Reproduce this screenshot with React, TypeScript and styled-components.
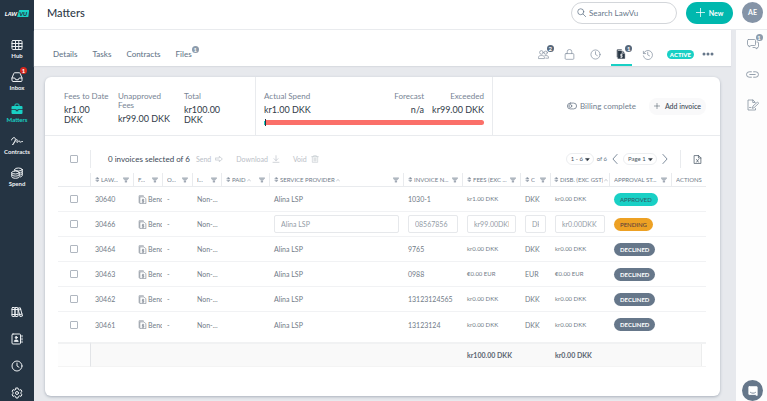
import React from 'react';
import styled, { createGlobalStyle, css } from 'styled-components';

const c = {
  navy: '#253443',
  teal: '#19d0c5',
  tealDark: '#00b8ae',
  slate: '#66778a',
  muted: '#8592a0',
  text: '#3b4856',
  line: '#e9ebee',
  canvas: '#e7e9ed',
};

const GlobalStyle = createGlobalStyle`
  *, *::before, *::after { box-sizing: border-box; }
  body { margin: 0; background: ${c.canvas}; font-family: Lato, "Liberation Sans", sans-serif; color: ${c.text}; }
  button, input, select { font: inherit; color: inherit; margin: 0; }
  a { color: inherit; text-decoration: none; }
`;

/* ---------- icons ---------- */

const Svg = styled.svg<{ $size?: number }>`
  display: block;
  flex: none;
  width: ${(p) => p.$size ?? 12}px;
  height: ${(p) => p.$size ?? 12}px;
  fill: none;
  stroke: currentColor;
  stroke-linecap: round;
  stroke-linejoin: round;
`;

type IconProps = { size?: number; weight?: number };
const makeIcon =
  (body: React.ReactNode, baseWeight = 2) =>
  ({ size = 12, weight = baseWeight }: IconProps) => (
    <Svg viewBox="0 0 24 24" $size={size} strokeWidth={weight} aria-hidden="true">
      {body}
    </Svg>
  );

const GridIcon = makeIcon(<><rect x="2" y="3" width="20" height="18" rx="2" /><path d="M2 9h20M2 15h20M9 3v18M15.500 3v18" /></>);
const InboxIcon = makeIcon(<><path d="M2 14l3.500-9a2 2 0 0 1 2-1.500h9a2 2 0 0 1 2 1.500L22 14v5a2 2 0 0 1-2 2H4a2 2 0 0 1-2-2z" /><path d="M2 14h5.500l2 3.500h5l2-3.500H22" /></>);
const BriefcaseIcon = makeIcon(
  <>
    <path d="M8 6V4a2 2 0 0 1 2-2h4a2 2 0 0 1 2 2v2" />
    <path d="M1 8a2 2 0 0 1 2-2h18a2 2 0 0 1 2 2v4.500H1z" fill="currentColor" stroke="none" />
    <path d="M1 14h8.500v2.500h5V14H23v6a2 2 0 0 1-2 2H3a2 2 0 0 1-2-2z" fill="currentColor" stroke="none" />
    <path d="M11 11.500h2v3h-2z" fill="currentColor" stroke="none" />
  </>,
);
const SignatureIcon = makeIcon(<path d="M1 10c1-4 5-6 7-4 3 3-3 10-5 14 4-4 7-12 9-11 2 .8-2 6 0 6s3-4 4.500-3.500 0 3 1.500 3 2-1.500 5-1.500" />);
const CoinsIcon = makeIcon(
  <>
    <ellipse cx="15" cy="5" rx="7.500" ry="3" />
    <path d="M7.500 5v3M22.500 5v12c0 1.500-2 2.500-4 3M22.500 9c0 1.500-2 2.500-4 3M22.500 13c0 1.500-2 2.500-4 3" />
    <ellipse cx="9" cy="11" rx="7.500" ry="3" />
    <path d="M1.500 11v8.500c0 1.700 3.400 3 7.500 3s7.500-1.300 7.500-3V11M1.500 15.200c0 1.700 3.400 3 7.500 3s7.500-1.300 7.500-3" />
  </>,
);
const BooksIcon = makeIcon(<><rect x="2" y="3" width="6" height="18" rx="1" /><rect x="8" y="3" width="6" height="18" rx="1" /><path d="M14.500 4.500l4-1 4.500 16.500-4 1zM2 7h12M2 17h12M15.500 8l4-1M18 17l4-1" /></>);
const ContactIcon = makeIcon(<><rect x="2" y="2" width="17" height="20" rx="2" /><circle cx="10.500" cy="9" r="2" fill="currentColor" /><path d="M6.500 16c0-3 8-3 8 0z" fill="currentColor" /><path d="M22 5v3M22 11v3M22 17v2" /></>);
const ClockIcon = makeIcon(<><circle cx="12" cy="12" r="10" /><path d="M12 6v6l4 2.500" /></>);
const GearIcon = makeIcon(
  <>
    <path d="M10 2h4l.7 3 2.300 1.300 3-1 2 3.500-2.300 2v2.400l2.300 2-2 3.500-3-1-2.300 1.300L14 22h-4l-.7-3L7 17.700l-3 1-2-3.500 2.300-2v-2.400L2 8.800l2-3.500 3 1L9.300 5z" />
    <circle cx="12" cy="12" r="3" />
  </>,
);
const SearchIcon = makeIcon(<><circle cx="10" cy="10" r="8" /><path d="M16 16l7 7" /></>, 2);
const PlusIcon = makeIcon(<path d="M12 1v22M1 12h22" />);
const PeopleIcon = makeIcon(
  <>
    <circle cx="7.500" cy="7.500" r="4" /><circle cx="17" cy="8" r="3.500" />
    <path d="M1 20v-2c0-5 13-5 13 0v2zM15 14.500c4-1 8 .5 8 3.500v2h-6" />
  </>,
);
const LockIcon = makeIcon(<><rect x="2.500" y="10" width="19" height="12.500" rx="2" /><path d="M7 10V6a5 5 0 0 1 10 0v4" /></>);
const HistoryIcon = makeIcon(<><path d="M3 5v5h5M3.500 9.500A10 10 0 1 1 3 15" /><path d="M12.500 7v6l4 2" /></>);
const InvoiceSolidIcon = makeIcon(
  <>
    <path d="M5 5h11l5 5v13H5z" fill="currentColor" />
    <path d="M3 19V2h10" strokeWidth="2" />
    <path d="M15 4v6h7" stroke="#fff" strokeWidth="1.500" />
    <path d="M15 13h-4v3h4v3.500h-4.500M13 11.500v9.500" stroke="#fff" strokeWidth="1.500" />
  </>,
);
const InvoiceIcon = makeIcon(
  <>
    <path d="M3 20V2h11" />
    <path d="M6 5h10l5 5v13H6z" />
    <path d="M15.500 12.500h-4v3h4v3.500h-4.500M13.300 11v10" />
  </>,
  1.6,
);
const ChatsIcon = makeIcon(<><path d="M3 3h12a2 2 0 0 1 2 2v8a2 2 0 0 1-2 2H8l-4 3v-3H3a2 2 0 0 1-2-2V5a2 2 0 0 1 2-2z" /><path d="M20 8h1a2 2 0 0 1 2 2v7a2 2 0 0 1-2 2h-1v3l-4-3h-4" /></>, 1.6);
const LinkIcon = makeIcon(<path d="M10 7H6a5 5 0 0 0 0 10h4M14 7h4a5 5 0 0 1 0 10h-4M7 12h10" />, 1.6);
const NoteIcon = makeIcon(<><path d="M17 19v3H2V2h10l4 4M11.500 2v5H16" /><path d="M11 18l1-4 9-8 2.500 2.500-9 8.500zM5 17h3" /></>, 1.6);
const ArrowIcon = makeIcon(<path d="M2 9h11V4l9 8-9 8v-5H2z" />);
const DownloadIcon = makeIcon(<path d="M12 2v15M6 11l6 6 6-6M3 22h18" />);
const TrashIcon = makeIcon(<path d="M2 5h20M8 5V2h8v3M4 5v17h16V5M9 9v9M12 9v9M15 9v9" />, 1.6);
const ToggleIcon = makeIcon(<><rect x="1" y="5" width="22" height="14" rx="7" /><circle cx="8" cy="12" r="3.500" /></>);
const LeftIcon = makeIcon(<path d="M17 1L7 12l10 11" />);
const RightIcon = makeIcon(<path d="M7 1l10 11L7 23" />);
const ExcelIcon = makeIcon(<><path d="M4 1.500h11l6 6v15H4zM14.500 1.500V8H21" /><path d="M9.500 12l5 7M14.500 12l-5 7" /></>);
const CaretIcon = makeIcon(<path d="M3 7h18l-9 11z" fill="currentColor" />);
const UpIcon = makeIcon(<path d="M4 16l8-7 8 7" />);
const SortIcon = makeIcon(<path d="M12 1l7 8H5zM12 23l7-8H5z" fill="currentColor" />);
const FilterIcon = makeIcon(<path d="M1 3h22v3H1zM5 9h14v2H5zM9 14h6v7H9z" fill="currentColor" strokeWidth="1" />);
const IntercomIcon = makeIcon(<><path d="M3 1.500h18a1 1 0 0 1 1 1V23l-5-2.500H3a1 1 0 0 1-1-1v-17a1 1 0 0 1 1-1z" fill="currentColor" /><path d="M6 15.500c3 2.500 9 2.500 12 0" stroke={c.slate} /></>);

/* ---------- page frame ---------- */

const Page = styled.div`
  display: flex;
  min-height: 100vh;
`;
const Sidebar = styled.nav`
  display: flex;
  flex-direction: column;
  flex: none;
  width: 34px;
  padding: 10px 0 2px;
  background: ${c.navy};
  color: #eceff2;
`;
const Logo = styled.a`
  display: flex;
  align-items: center;
  justify-content: center;
  height: 7px;
  margin: 0 0 22px 0;
  font: italic 900 6px/7px Lato, sans-serif;
  color: #fff;
`;
const LogoMark = styled.span`
  padding: 0 2px;
  background: ${c.teal};
  color: ${c.navy};
  clip-path: polygon(2px 0, 100% 0, calc(100% - 1px) 100%, 0 100%);
`;
const SideLink = styled.a<{ $active?: boolean }>`
  display: flex;
  flex-direction: column;
  align-items: center;
  gap: 1px;
  height: 32px;
  font: 700 6px/8px Lato, sans-serif;
  color: ${(p) => (p.$active ? c.teal : '#eceff2')};
`;
const SideTools = styled.div`
  display: flex;
  flex-direction: column;
  align-items: center;
  gap: 15px;
  margin-top: auto;
`;
const Badged = styled.span`
  position: relative;
  display: flex;
`;
const Badge = styled.span<{ $tone: 'red' | 'dark' | 'light' }>`
  position: absolute;
  left: 9px;
  top: -4px;
  width: 7px;
  height: 7px;
  border-radius: 50%;
  font: 700 6px/7px Lato, sans-serif;
  text-align: center;
  color: #fff;
  background: ${(p) => ({ red: '#d5281e', dark: '#56677a', light: '#8c9bab' })[p.$tone]};
`;

const Content = styled.div`
  display: flex;
  flex-direction: column;
  flex: 1;
  min-width: 0;
`;
const Header = styled.header`
  display: flex;
  align-items: center;
  height: 30px;
  padding: 0 4px 4px 13px;
  background: #fff;
  border-bottom: 1px solid ${c.line};
`;
const Title = styled.h1`
  margin: 0 auto 0 0;
  font: 500 11px/14px Lato, sans-serif;
  color: #2d3947;
`;
const SearchBox = styled.label`
  display: flex;
  align-items: center;
  gap: 3px;
  width: 106px;
  height: 22px;
  padding: 0 5px;
  border: 1px solid #d3d6da;
  border-radius: 11px;
  color: ${c.slate};
`;
const SearchInput = styled.input`
  min-width: 0;
  width: 100%;
  padding: 0;
  border: 0;
  outline: 0;
  background: none;
  font-size: 8px;
  line-height: 12px;
  &::placeholder { color: ${c.slate}; opacity: 1; }
`;
const NewButton = styled.button`
  display: flex;
  align-items: center;
  justify-content: center;
  gap: 4px;
  width: 47px;
  height: 22px;
  margin: 0 9px;
  border: 0;
  border-radius: 11px;
  background: ${c.tealDark};
  color: #fff;
  font: 700 7px/10px Lato, sans-serif;
`;
const Avatar = styled.button`
  width: 21px;
  height: 21px;
  padding: 0;
  border: 0;
  border-radius: 50%;
  background: #8594a7;
  color: #fff;
  font: 700 7px/21px Lato, sans-serif;
`;

const Body = styled.div`
  display: flex;
  flex: 1;
  gap: 5px;
`;
const Main = styled.main`
  display: flex;
  flex-direction: column;
  flex: 1;
  min-width: 0;
`;
const Rail = styled.aside`
  display: flex;
  flex-direction: column;
  align-items: center;
  gap: 18px;
  width: 31px;
  padding: 8px 0 0 2px;
  background: #fdfdfd;
  color: ${c.muted};
`;
const BareButton = styled.button`
  display: flex;
  align-items: center;
  padding: 0;
  border: 0;
  background: none;
`;
const ChatButton = styled(BareButton)`
  justify-content: center;
  width: 21px;
  height: 21px;
  margin-top: auto;
  border-radius: 50%;
  background: ${c.slate};
  color: #fff;
`;

const TabBar = styled.div`
  display: flex;
  height: 36px;
  padding: 12px 17px 0 19px;
  background: #fff;
  box-shadow: 0 1px 1px #d9dce1;
`;
const Tabs = styled.nav`
  display: flex;
  align-items: center;
  gap: 15px;
  margin-right: auto;
  font: 500 8px/10px Lato, sans-serif;
  color: ${c.slate};
`;
const TabTools = styled.div`
  display: flex;
  align-items: stretch;
  gap: 5px;
`;
const ToolTab = styled.button<{ $active?: boolean }>`
  display: flex;
  align-items: center;
  justify-content: center;
  width: 21px;
  padding: 0;
  border: 0;
  border-top: 2px solid transparent;
  border-bottom: 2px solid ${(p) => (p.$active ? c.teal : 'transparent')};
  background: none;
  color: ${(p) => (p.$active ? '#263442' : c.muted)};
`;
const ActiveTag = styled.span`
  align-self: center;
  margin: 0 3px 0 4px;
  padding: 0 3px;
  border-radius: 5px;
  background: ${c.teal};
  color: #fff;
  font: 900 6px/9px Lato, sans-serif;
`;
const TabBadge = styled.a`
  position: relative;
  ${Badge} { left: 100%; top: -3px; }
`;

/* ---------- card ---------- */

const Card = styled.section`
  flex: 1;
  margin: 11px 11px 5px;
  padding-bottom: 29px;
  border-radius: 6px;
  background: #fff;
  box-shadow: 0 1px 3px #a9b0bb;
`;
const Summary = styled.div`
  display: grid;
  grid-template-columns: 211px minmax(160px, 237fr) minmax(150px, 227fr);
  height: 59px;
  border-bottom: 1px solid ${c.line};
`;
const Totals = styled.div`
  display: grid;
  grid-template-columns: 45px 57px 42px;
  column-gap: 9px;
  padding: 15px 0 0 19px;
  border-right: 1px solid ${c.line};
`;
const Spend = styled.div`
  padding: 15px 8px 0;
  border-right: 1px solid ${c.line};
`;
const SpendRow = styled.div`
  display: flex;
  gap: 8px;
  & > :first-child { margin-right: auto; }
`;
const Figure = styled.dl<{ $end?: boolean }>`
  margin: 0;
  text-align: ${(p) => (p.$end ? 'right' : 'left')};
  dt { margin-bottom: 4px; font-size: 8px; line-height: 9px; color: #778494; }
  dd { margin: 0; font-size: 9px; line-height: 10px; color: #2f3a47; }
`;
const SpendBar = styled.div`
  display: flex;
  align-items: center;
  height: 7px;
  margin-top: 4px;
`;
const BarPart = styled.span<{ $kind: 'spent' | 'mark' | 'over' }>`
  ${(p) =>
    ({
      spent: css`width: 1px; height: 4px; background: ${c.teal};`,
      mark: css`width: 1px; height: 7px; background: #26323d;`,
      over: css`flex: 1; height: 5px; border-radius: 0 3px 3px 0; background: #fb7069;`,
    })[p.$kind]}
`;
const SummaryActions = styled.div`
  display: flex;
  align-items: center;
  justify-content: flex-end;
  gap: 13px;
  padding-right: 14px;
`;
const ToggleButton = styled(BareButton)`
  gap: 3px;
  font-size: 8px;
  line-height: 10px;
  color: #73808f;
`;
const AddButton = styled(BareButton)`
  gap: 5px;
  height: 17px;
  padding: 0 5px;
  border-radius: 8px;
  background: #f9f9fa;
  font: 500 7px/10px Lato, sans-serif;
`;

const Toolbar = styled.div`
  display: flex;
  align-items: center;
  height: 18px;
  margin: 14px 14px 5px 13px;
  font-size: 6px;
  line-height: 10px;
`;
const SelectAll = styled.label`
  display: flex;
  align-items: center;
  justify-content: center;
  width: 33px;
  height: 18px;
  border-right: 1px solid ${c.line};
`;
const Check = styled.input.attrs({ type: 'checkbox' })`
  appearance: none;
  display: block;
  width: 8px;
  height: 8px;
  border: 1px solid #b0b7c0;
  border-radius: 1px;
  background: #fff;
  &:checked { background: ${c.tealDark}; }
`;
const Selected = styled.span`
  margin: 0 6px 0 17px;
  font-size: 8px;
`;
const BulkButton = styled(BareButton)`
  gap: 4px;
  margin-right: 13px;
  font-size: 7px;
  color: #bac0c7;
`;
const Pager = styled.div`
  display: flex;
  align-items: center;
  gap: 3px;
  height: 18px;
  margin-left: auto;
  padding-right: 10px;
  border-right: 1px solid ${c.line};
  color: ${c.slate};
`;
const SelectShell = styled.span<{ $width: number }>`
  display: grid;
  align-items: center;
  width: ${(p) => p.$width}px;
  height: 12px;
  border: 1px solid #eceef0;
  border-radius: 6px;
  & > * { grid-area: 1 / 1; }
  & > svg { justify-self: end; margin-right: 3px; color: #222c36; pointer-events: none; }
`;
const PageSelect = styled.select`
  appearance: none;
  width: 100%;
  height: 10px;
  padding: 0 0 0 4px;
  border: 0;
  background: none;
  font-size: 6px;
  color: #4a5663;
`;
const ExportButton = styled(BareButton)`
  margin: 0 4px 0 12px;
  color: #4f5c6a;
`;

/* ---------- table ---------- */

const TableWrap = styled.div`
  margin: 0 14px 0 13px;
`;
const Table = styled.table`
  width: 100%;
  table-layout: fixed;
  border-collapse: separate;
  border-spacing: 0;
`;
const Col = styled.col<{ $width?: number }>`
  ${(p) => p.$width && css`width: ${p.$width}px;`}
`;
const Th = styled.th<{ $plain?: boolean; $tight?: boolean }>`
  height: 14px;
  padding: ${(p) => (p.$tight ? '0 0 0 3px' : '0 4px')};
  border-bottom: 1px solid ${c.line};
  ${(p) => !p.$plain && css`border-left: 1px solid ${c.line};`}
  font: 400 6px/8px Lato, sans-serif;
  text-align: left;
  color: #6f7b89;
`;
const HeadCell = styled.div<{ $tight?: boolean }>`
  display: flex;
  align-items: center;
  gap: 1px;
  color: #8a95a2;
  & > span { overflow: hidden; white-space: nowrap; text-overflow: ellipsis; color: #6f7b89; }
  ${(p) => !p.$tight && css`& > :last-child:not(:only-child) { margin-left: auto; }`}
`;
const Td = styled.td<{ $small?: boolean }>`
  height: 25px;
  padding: 0 0 0 5px;
  overflow: hidden;
  white-space: nowrap;
  border-bottom: 1px solid #f1f2f4;
  font-size: ${(p) => (p.$small ? 6 : 7)}px;
  line-height: 10px;
  color: #717b87;
`;
const Row = styled.tr`
  &:last-child > ${Td} { height: 30px; padding-bottom: 5px; border-bottom: 0; }
`;
const CheckTd = styled(Td)`
  padding-left: 12px;
`;
const FieldTd = styled(Td)`
  padding-right: 4px;
`;
const Benefit = styled.span`
  display: flex;
  align-items: center;
  gap: 1px;
  overflow: hidden;
`;
const Field = styled.input`
  display: block;
  width: 100%;
  height: 18px;
  padding: 0 6px;
  border: 1px solid #e6e8eb;
  border-radius: 2px;
  background: #fff;
  font-size: 7px;
  color: #939ca6;
`;
const Status = styled.span<{ $kind: string }>`
  display: inline-block;
  vertical-align: middle;
  padding: 0 6px;
  border-radius: 7px;
  font: 500 6px/13px Lato, sans-serif;
  ${(p) => p.$kind === 'APPROVED' && css`background: ${c.teal}; color: #2f5f6b;`}
  ${(p) => p.$kind === 'PENDING' && css`background: #eda124; color: #5a3f3c;`}
  ${(p) => p.$kind === 'DECLINED' && css`background: ${c.slate}; color: #fff; font-weight: 700;`}
`;
const FootTd = styled.td<{ $edge?: boolean; $blank?: boolean; $end?: boolean }>`
  height: 25px;
  padding: ${(p) => (p.$end ? '0 4px 0 0' : '0 0 0 5px')};
  border-top: 2px solid #f1f2f3;
  border-bottom: 1px solid #f4f4f4;
  ${(p) => p.$edge && css`border-left: 1px solid #e2e4e7;`}
  background: ${(p) => (p.$end ? '#fff' : p.$blank ? '#fdfdfd' : '#f9f9f9')};
  font: 700 7px/10px Lato, sans-serif;
  color: #5c6672;
`;
const FootFill = styled.div`
  height: 22px;
  border-right: 1px solid #eceded;
  background: #f9f9f9;
`;

type Column = { label: string; width?: number; sort?: boolean; up?: boolean; filter?: boolean };
const columns: Column[] = [
  { label: 'LAW...', width: 43, sort: true, filter: true },
  { label: 'F...', width: 29, filter: true },
  { label: 'O...', width: 30, filter: true },
  { label: 'I...', width: 29, filter: true },
  { label: 'PAID', width: 48, sort: true, up: true, filter: true },
  { label: 'SERVICE PROVIDER', sort: true, up: true, filter: true },
  { label: 'INVOICE N...', width: 59, sort: true, filter: true },
  { label: 'FEES (EXC ...', width: 58, sort: true, filter: true },
  { label: 'C', width: 30, sort: true, filter: true },
  { label: 'DISB. (EXC GST)', width: 59, sort: true, up: true },
  { label: 'APPROVAL ST...', width: 62, filter: true },
  { label: 'ACTIONS', width: 35 },
];

const invoices = [
  { id: '30640', number: '1030-1', fees: 'kr1.00 DKK', cur: 'DKK', disb: 'kr0.00 DKK', status: 'APPROVED' },
  { id: '30466', number: '08567856', fees: 'kr99.00DKK', cur: 'DKK', disb: 'kr0.00DKK', status: 'PENDING', editing: true },
  { id: '30464', number: '9765', fees: 'kr0.00 DKK', cur: 'DKK', disb: 'kr0.00 DKK', status: 'DECLINED' },
  { id: '30463', number: '0988', fees: '€0.00 EUR', cur: 'EUR', disb: '€0.00 EUR', status: 'DECLINED' },
  { id: '30462', number: '13123124565', fees: 'kr0.00 DKK', cur: 'DKK', disb: 'kr0.00 DKK', status: 'DECLINED' },
  { id: '30461', number: '13123124', fees: 'kr0.00 DKK', cur: 'DKK', disb: 'kr0.00 DKK', status: 'DECLINED' },
];

function InvoiceRow({ row }: { row: (typeof invoices)[number] }) {
  const cell = (label: string, value: string, small = false) =>
    row.editing ? (
      <FieldTd><Field aria-label={label} defaultValue={value} /></FieldTd>
    ) : (
      <Td $small={small}>{value}</Td>
    );
  return (
    <Row>
      <CheckTd><Check aria-label={`Select invoice ${row.id}`} /></CheckTd>
      <Td>{row.id}</Td>
      <Td><Benefit><InvoiceIcon size={9} />Benc</Benefit></Td>
      <Td>-</Td>
      <Td>Non-...</Td>
      <Td />
      {cell('Service provider', 'Alina LSP')}
      {cell('Invoice number', row.number)}
      {cell('Fees', row.fees, true)}
      {cell('Currency', row.cur)}
      {cell('Disbursements', row.disb, true)}
      <Td><Status $kind={row.status}>{row.status}</Status></Td>
      <Td />
    </Row>
  );
}

function InvoiceTable() {
  return (
    <TableWrap>
      <Table>
        <colgroup>
          <Col $width={32} />
          {columns.map((col) => <Col key={col.label} $width={col.width} />)}
        </colgroup>
        <thead>
          <tr>
            <Th $plain />
            {columns.map((col) => {
              const tight = col.up && !col.filter;
              return (
                <Th key={col.label} $tight={tight}>
                  <HeadCell $tight={tight}>
                    {col.sort && <SortIcon size={5} />}
                    <span>{col.label}</span>
                    {col.up && <UpIcon size={4} weight={3} />}
                    {col.filter && <FilterIcon size={6} />}
                  </HeadCell>
                </Th>
              );
            })}
          </tr>
        </thead>
        <tbody>
          {invoices.map((row) => <InvoiceRow key={row.id} row={row} />)}
        </tbody>
        <tfoot>
          <tr>
            <FootTd $blank />
            <FootTd $edge colSpan={7} />
            <FootTd colSpan={2}>kr100.00 DKK</FootTd>
            <FootTd>kr0.00 DKK</FootTd>
            <FootTd $end colSpan={2}><FootFill /></FootTd>
          </tr>
        </tfoot>
      </Table>
    </TableWrap>
  );
}

const sideLinks = [
  { label: 'Hub', Icon: GridIcon },
  { label: 'Inbox', Icon: InboxIcon, badge: '1' },
  { label: 'Matters', Icon: BriefcaseIcon, active: true },
  { label: 'Contracts', Icon: SignatureIcon },
  { label: 'Spend', Icon: CoinsIcon },
];
const sideTools = [
  { label: 'Library', Icon: BooksIcon },
  { label: 'Contacts', Icon: ContactIcon },
  { label: 'Recent', Icon: ClockIcon },
  { label: 'Settings', Icon: GearIcon },
];
const toolTabs = [
  { label: 'People', Icon: PeopleIcon, badge: '2' },
  { label: 'Access', Icon: LockIcon },
  { label: 'Time', Icon: ClockIcon },
  { label: 'Invoices', Icon: InvoiceSolidIcon, badge: '1', active: true },
  { label: 'History', Icon: HistoryIcon },
];

export default function App() {
  return (
    <>
      <GlobalStyle />
      <Page>
        <Sidebar>
          <Logo href="#home">LAW<LogoMark>VU</LogoMark></Logo>
          {sideLinks.map(({ label, Icon, badge, active }) => (
            <SideLink key={label} href={`#${label.toLowerCase()}`} $active={active}>
              <Badged><Icon />{badge && <Badge $tone="red">{badge}</Badge>}</Badged>
              {label}
            </SideLink>
          ))}
          <SideTools>
            {sideTools.map(({ label, Icon }) => (
              <a key={label} href={`#${label.toLowerCase()}`} aria-label={label}><Icon /></a>
            ))}
          </SideTools>
        </Sidebar>
        <Content>
          <Header>
            <Title>Matters</Title>
            <SearchBox>
              <SearchIcon size={9} />
              <SearchInput aria-label="Search" placeholder="Search LawVu" />
            </SearchBox>
            <NewButton><PlusIcon size={9} />New</NewButton>
            <Avatar>AE</Avatar>
          </Header>
          <Body>
            <Main>
              <TabBar>
                <Tabs>
                  <a href="#details">Details</a>
                  <a href="#tasks">Tasks</a>
                  <a href="#matter-contracts">Contracts</a>
                  <TabBadge href="#files">Files<Badge $tone="light">1</Badge></TabBadge>
                </Tabs>
                <TabTools>
                  {toolTabs.map(({ label, Icon, badge, active }) => (
                    <ToolTab key={label} aria-label={label} $active={active}>
                      <Badged>
                        <Icon size={active ? 10 : 11} weight={active ? 1 : 1.6} />
                        {badge && <Badge $tone="dark">{badge}</Badge>}
                      </Badged>
                    </ToolTab>
                  ))}
                  <ActiveTag>ACTIVE</ActiveTag>
                  <BareButton aria-label="More">
                    <Svg viewBox="0 0 24 24" $size={12}>
                      <g fill={c.slate} stroke="none"><circle cx="4" cy="12" r="3" /><circle cx="12" cy="12" r="3" /><circle cx="20" cy="12" r="3" /></g>
                    </Svg>
                  </BareButton>
                </TabTools>
              </TabBar>
              <Card>
                <Summary>
                  <Totals>
                    <Figure><dt>Fees to Date</dt><dd>kr1.00 DKK</dd></Figure>
                    <Figure><dt>Unapproved Fees</dt><dd>kr99.00 DKK</dd></Figure>
                    <Figure><dt>Total</dt><dd>kr100.00 DKK</dd></Figure>
                  </Totals>
                  <Spend>
                    <SpendRow>
                      <Figure><dt>Actual Spend</dt><dd>kr1.00 DKK</dd></Figure>
                      <Figure $end><dt>Forecast</dt><dd>n/a</dd></Figure>
                      <Figure $end><dt>Exceeded</dt><dd>kr99.00 DKK</dd></Figure>
                    </SpendRow>
                    <SpendBar>
                      <BarPart $kind="spent" /><BarPart $kind="mark" /><BarPart $kind="over" />
                    </SpendBar>
                  </Spend>
                  <SummaryActions>
                    <ToggleButton><ToggleIcon size={10} />Billing complete</ToggleButton>
                    <AddButton><PlusIcon size={6} />Add invoice</AddButton>
                  </SummaryActions>
                </Summary>
                <Toolbar>
                  <SelectAll><Check aria-label="Select all invoices" /></SelectAll>
                  <Selected>0 invoices selected of 6</Selected>
                  <BulkButton disabled>Send<ArrowIcon size={8} /></BulkButton>
                  <BulkButton disabled>Download<DownloadIcon size={8} /></BulkButton>
                  <BulkButton disabled>Void<TrashIcon size={8} /></BulkButton>
                  <Pager>
                    <SelectShell $width={28}>
                      <PageSelect aria-label="Range"><option>1 - 6</option></PageSelect>
                      <CaretIcon size={5} />
                    </SelectShell>
                    <span>of 6</span>
                    <BareButton aria-label="Previous page"><LeftIcon size={10} /></BareButton>
                    <SelectShell $width={34}>
                      <PageSelect aria-label="Page"><option>Page 1</option></PageSelect>
                      <CaretIcon size={5} />
                    </SelectShell>
                    <BareButton aria-label="Next page"><RightIcon size={10} /></BareButton>
                  </Pager>
                  <ExportButton aria-label="Export to Excel"><ExcelIcon size={9} /></ExportButton>
                </Toolbar>
                <InvoiceTable />
              </Card>
            </Main>
            <Rail>
              <BareButton aria-label="Messages">
                <Badged><ChatsIcon /><Badge $tone="light">1</Badge></Badged>
              </BareButton>
              <BareButton aria-label="Links"><LinkIcon size={13} /></BareButton>
              <BareButton aria-label="Notes"><NoteIcon /></BareButton>
              <ChatButton aria-label="Open chat"><IntercomIcon size={10} /></ChatButton>
            </Rail>
          </Body>
        </Content>
      </Page>
    </>
  );
}
